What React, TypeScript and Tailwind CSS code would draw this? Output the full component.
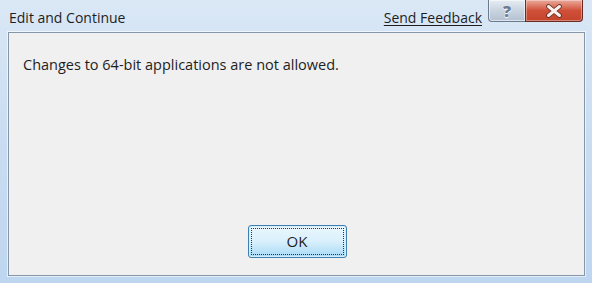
import React from "react";

const font = { fontFamily: '"Open Sans", "Noto Sans", "Liberation Sans", sans-serif' };

function HelpButton() {
  return (
    <div className="flex h-[22px] w-[37px] items-center justify-center rounded-bl-[4px] border border-t-0 border-r-0 border-[#6b7a8f] bg-gradient-to-b from-[#e6ecf3] via-[#c9d4e0] to-[#b3c1d2] shadow-[inset_0_0_0_1px_rgba(255,255,255,0.55)]">
      <span className="text-[16px] font-extrabold leading-[20px] text-[#6c7d93] [text-shadow:0_0_1px_#fff,0_1px_1px_#fff]">
        ?
      </span>
    </div>
  );
}

function CloseButton() {
  return (
    <div className="flex h-[22px] w-[58px] items-center justify-center rounded-br-[4px] border border-t-0 border-[#6a2b22] bg-gradient-to-b from-[#eaa99b] via-[#cf4f38] to-[#c4442c] shadow-[inset_0_0_0_1px_rgba(255,255,255,0.35)]">
      <svg width="18" height="14" viewBox="0 0 18 14">
        <path
          d="M3.5 2.5 L14.5 11.5 M14.5 2.5 L3.5 11.5"
          stroke="#5a2a22"
          strokeWidth="4.6"
          strokeLinecap="round"
        />
        <path
          d="M3.5 2.5 L14.5 11.5 M14.5 2.5 L3.5 11.5"
          stroke="#fbefec"
          strokeWidth="3"
          strokeLinecap="round"
        />
      </svg>
    </div>
  );
}

export default function App() {
  return (
    <div
      style={font}
      className="flex h-[283px] w-[592px] flex-col overflow-hidden bg-gradient-to-b from-[#dae8f6] via-[#c9dcf1] to-[#bfd6f0] text-black"
    >
      {/* title bar */}
      <div className="flex h-[32px] shrink-0 items-start">
        <div className="pl-[9px] pt-[8px] text-[14px] leading-[20px] text-[#1e1e1e]">
          Edit and Continue
        </div>
        <div className="flex-1" />
        <div className="pt-[8px] pr-[6px] text-[14px] leading-[20px] text-[#1e1e1e] underline underline-offset-2">
          Send Feedback
        </div>
        <div className="mr-[9px] flex">
          <HelpButton />
          <CloseButton />
        </div>
      </div>

      {/* client area */}
      <div className="mx-[7px] mb-[7px] ml-[8px] flex flex-1 flex-col border border-[#8596ab] bg-[#f0f0f0] shadow-[0_0_0_1px_rgba(255,255,255,0.6)]">
        <p className="pl-[14px] pt-[22px] text-[14.5px] leading-[20px] text-[#1e1e1e]">
          Changes to 64-bit applications are not allowed.
        </p>
        <div className="flex-1" />
        <div className="mb-[17px] flex justify-center">
          <button className="ml-[1px] flex h-[33px] w-[99px] items-center justify-center rounded-[3px] border border-[#3c7fb1] bg-gradient-to-b from-[#eaf6fd] via-[#d9f0fc] to-[#a7d9f5] p-[2px] shadow-[inset_0_0_0_1px_#d6eefb]">
            <span className="flex h-full w-full items-center justify-center border border-dotted border-[#333] text-[15px] leading-none text-[#1e1e1e]">
              OK
            </span>
          </button>
        </div>
      </div>
    </div>
  );
}
